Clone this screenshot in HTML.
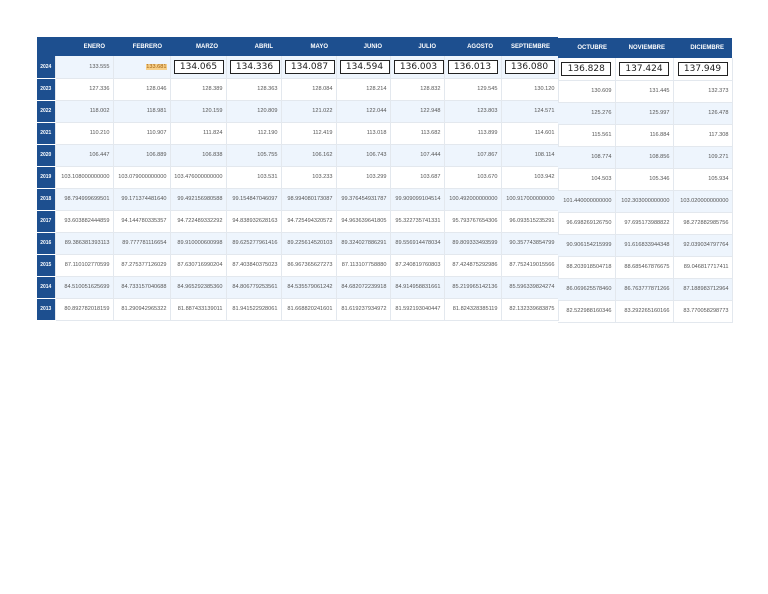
<!DOCTYPE html>
<html><head><style>
body{margin:0;width:768px;height:594px;background:#fff;position:relative;overflow:hidden;font-family:"Liberation Sans",sans-serif}
table{position:absolute;border-collapse:collapse;table-layout:fixed}
td,th{padding:0 3px;font-size:5.6px;color:#555;text-align:right;border-right:1px solid #e3e8ee;border-bottom:1px solid #e3e8ee;white-space:nowrap;overflow:hidden}
th{background:#1d4f8f;color:#fff;font-weight:bold;font-size:6px;border:none;text-align:right;padding-right:8px}
td.y{background:#1d4f8f;color:#fff;font-weight:bold;font-size:5px;text-align:center;padding:0;border-bottom:1px solid #fff}
tr.a td{background:#eef5fd}
tr.a td.y{background:#1d4f8f}
.b{display:inline-block;border:1.5px solid #222;background:#fff;color:#222;font-family:"DejaVu Sans",sans-serif;font-size:9px;padding:1px 0;width:48px;text-align:center}
.hl{background:#f7d08a;color:#a06010}
</style></head><body>
<table style="left:37px;top:37px;width:521px">
<colgroup><col style="width:18px"><col style="width:58px"><col style="width:57px"><col style="width:56px"><col style="width:55px"><col style="width:55px"><col style="width:54px"><col style="width:54px"><col style="width:57px"><col style="width:57px"></colgroup>
<tr style="height:19px"><th></th><th>ENERO</th><th>FEBRERO</th><th>MARZO</th><th>ABRIL</th><th>MAYO</th><th>JUNIO</th><th>JULIO</th><th>AGOSTO</th><th>SEPTIEMBRE</th></tr>
<tr class="a" style="height:22px"><td class="y">2024</td><td>133.555</td><td><span class="hl">133.681</span></td><td style="text-align:center"><span class="b">134.065</span></td><td style="text-align:center"><span class="b">134.336</span></td><td style="text-align:center"><span class="b">134.087</span></td><td style="text-align:center"><span class="b">134.594</span></td><td style="text-align:center"><span class="b">136.003</span></td><td style="text-align:center"><span class="b">136.013</span></td><td style="text-align:center"><span class="b">136.080</span></td></tr>
<tr style="height:22px"><td class="y">2023</td><td>127.336</td><td>128.046</td><td>128.389</td><td>128.363</td><td>128.084</td><td>128.214</td><td>128.832</td><td>129.545</td><td>130.120</td></tr>
<tr class="a" style="height:22px"><td class="y">2022</td><td>118.002</td><td>118.981</td><td>120.159</td><td>120.809</td><td>121.022</td><td>122.044</td><td>122.948</td><td>123.803</td><td>124.571</td></tr>
<tr style="height:22px"><td class="y">2021</td><td>110.210</td><td>110.907</td><td>111.824</td><td>112.190</td><td>112.419</td><td>113.018</td><td>113.682</td><td>113.899</td><td>114.601</td></tr>
<tr class="a" style="height:22px"><td class="y">2020</td><td>106.447</td><td>106.889</td><td>106.838</td><td>105.755</td><td>106.162</td><td>106.743</td><td>107.444</td><td>107.867</td><td>108.114</td></tr>
<tr style="height:22px"><td class="y">2019</td><td>103.108000000000</td><td>103.079000000000</td><td>103.476000000000</td><td>103.531</td><td>103.233</td><td>103.299</td><td>103.687</td><td>103.670</td><td>103.942</td></tr>
<tr class="a" style="height:22px"><td class="y">2018</td><td>98.794999699501</td><td>99.171374481640</td><td>99.492156980588</td><td>99.154847046097</td><td>98.994080173087</td><td>99.376454931787</td><td>99.909099104514</td><td>100.492000000000</td><td>100.917000000000</td></tr>
<tr style="height:22px"><td class="y">2017</td><td>93.603882444859</td><td>94.144780335357</td><td>94.722489332292</td><td>94.838932628163</td><td>94.725494320572</td><td>94.963639641805</td><td>95.322735741331</td><td>95.793767654306</td><td>96.093515235291</td></tr>
<tr class="a" style="height:22px"><td class="y">2016</td><td>89.386381393113</td><td>89.777781116654</td><td>89.910000600998</td><td>89.625277961416</td><td>89.225614520103</td><td>89.324027886291</td><td>89.556914478034</td><td>89.809333493599</td><td>90.357743854799</td></tr>
<tr style="height:22px"><td class="y">2015</td><td>87.110102770599</td><td>87.275377126029</td><td>87.630716990204</td><td>87.403840375023</td><td>86.967365627273</td><td>87.113107758880</td><td>87.240819760803</td><td>87.424875292986</td><td>87.752419015566</td></tr>
<tr class="a" style="height:22px"><td class="y">2014</td><td>84.510051625699</td><td>84.733157040688</td><td>84.965292385360</td><td>84.806779253561</td><td>84.535579061242</td><td>84.682072239918</td><td>84.914958831661</td><td>85.219965142136</td><td>85.596339824274</td></tr>
<tr style="height:22px"><td class="y">2013</td><td>80.892782018159</td><td>81.290942965322</td><td>81.887433139011</td><td>81.941522928061</td><td>81.668820241601</td><td>81.619237934972</td><td>81.592193040447</td><td>81.824328385119</td><td>82.132339683875</td></tr>
</table>
<table style="left:558px;top:38px;width:174px">
<colgroup><col style="width:57px"><col style="width:58px"><col style="width:59px"></colgroup>
<tr style="height:20px"><th>OCTUBRE</th><th>NOVIEMBRE</th><th>DICIEMBRE</th></tr>
<tr style="height:22px"><td style="text-align:center"><span class="b">136.828</span></td><td style="text-align:center"><span class="b">137.424</span></td><td style="text-align:center"><span class="b">137.949</span></td></tr>
<tr style="height:22px"><td>130.609</td><td>131.445</td><td>132.373</td></tr>
<tr class="a" style="height:22px"><td>125.276</td><td>125.997</td><td>126.478</td></tr>
<tr style="height:22px"><td>115.561</td><td>116.884</td><td>117.308</td></tr>
<tr class="a" style="height:22px"><td>108.774</td><td>108.856</td><td>109.271</td></tr>
<tr style="height:22px"><td>104.503</td><td>105.346</td><td>105.934</td></tr>
<tr class="a" style="height:22px"><td>101.440000000000</td><td>102.303000000000</td><td>103.020000000000</td></tr>
<tr style="height:22px"><td>96.698269126750</td><td>97.695173988822</td><td>98.272882985756</td></tr>
<tr class="a" style="height:22px"><td>90.906154215999</td><td>91.616833944348</td><td>92.039034797764</td></tr>
<tr style="height:22px"><td>88.203918504718</td><td>88.685467876675</td><td>89.046817717411</td></tr>
<tr class="a" style="height:22px"><td>86.069625578460</td><td>86.763777871266</td><td>87.188983712964</td></tr>
<tr style="height:22px"><td>82.522988160346</td><td>83.292265160166</td><td>83.770058298773</td></tr>
</table>
</body></html>
